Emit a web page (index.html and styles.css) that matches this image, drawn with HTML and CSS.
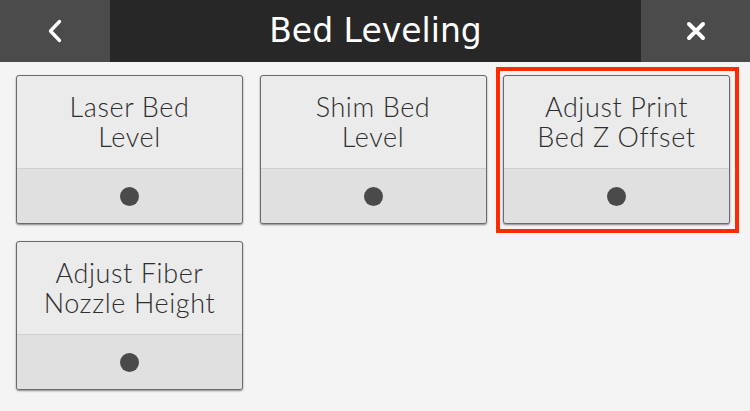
FILE: index.html
```html
<!DOCTYPE html>
<html>
<head>
<meta charset="utf-8">
<link rel="stylesheet" href="styles.css">
</head>
<body>
<div class="screen">
  <header class="topbar">
    <div class="nav-btn">
      <svg width="20" height="26" viewBox="0 0 20 26"><path d="M14.5 3.5 L5.5 13 L14.5 22.5" fill="none" stroke="#fff" stroke-width="3.4" stroke-linecap="round" stroke-linejoin="round"/></svg>
    </div>
    <div class="title">Bed Leveling</div>
    <div class="nav-btn">
      <svg width="20" height="20" viewBox="0 0 20 20"><path d="M3 3 L17 17 M17 3 L3 17" fill="none" stroke="#fff" stroke-width="4" stroke-linecap="round"/></svg>
    </div>
  </header>
  <main class="grid">
    <div class="card">
      <div class="card-label">Laser Bed<br>Level</div>
      <div class="card-foot"><span class="dot"></span></div>
    </div>
    <div class="card">
      <div class="card-label">Shim Bed<br>Level</div>
      <div class="card-foot"><span class="dot"></span></div>
    </div>
    <div class="card selected">
      <div class="card-label">Adjust Print<br>Bed Z Offset</div>
      <div class="card-foot"><span class="dot"></span></div>
    </div>
    <div class="card">
      <div class="card-label">Adjust Fiber<br>Nozzle Height</div>
      <div class="card-foot"><span class="dot"></span></div>
    </div>
  </main>
</div>
</body>
</html>
```
FILE: styles.css
```css
html, body {
  margin: 0;
  padding: 0;
  background: #f4f4f4;
}
.screen {
  width: 750px;
  height: 411px;
  overflow: hidden;
  background: #f4f4f4;
}
.topbar {
  display: flex;
  height: 62px;
  background: #272727;
}
.nav-btn {
  width: 110px;
  display: flex;
  align-items: center;
  justify-content: center;
  background: #4b4b4b;
}
.nav-btn:last-child {
  width: 109px;
}
.title {
  flex: 1;
  display: flex;
  align-items: center;
  justify-content: center;
  color: #fff;
  font-family: "DejaVu Sans", sans-serif;
  font-size: 33px;
  padding-bottom: 2px;
}
.grid {
  display: grid;
  grid-template-columns: repeat(3, 227px);
  grid-auto-rows: 149px;
  column-gap: 16.5px;
  row-gap: 17px;
  padding: 13px 0 0 16px;
}
.card {
  position: relative;
  display: flex;
  flex-direction: column;
  border: 1px solid #6a6a6a;
  border-radius: 3px;
  box-shadow: 0 1px 2px rgba(0,0,0,0.45);
  background: #ebebeb;
}
.card-label {
  height: 92px;
  display: flex;
  align-items: center;
  justify-content: center;
  text-align: center;
  font-family: "Lato", sans-serif;
  font-weight: 300;
  font-size: 27px;
  line-height: 30px;
  letter-spacing: 0.6px;
  color: #2e2e2e;
  border-bottom: 1px solid #cfcfcf;
  border-radius: 3px 3px 0 0;
}
.card-foot {
  flex: 1;
  display: flex;
  align-items: center;
  justify-content: center;
  background: #e0e0e0;
  border-radius: 0 0 3px 3px;
}
.dot {
  width: 19px;
  height: 19px;
  border-radius: 50%;
  background: #4a4a4a;
}
.selected::after {
  content: "";
  position: absolute;
  top: -9px;
  left: -8px;
  right: -10px;
  bottom: -10px;
  border: 4px solid #ff2a00;
  pointer-events: none;
}
```
